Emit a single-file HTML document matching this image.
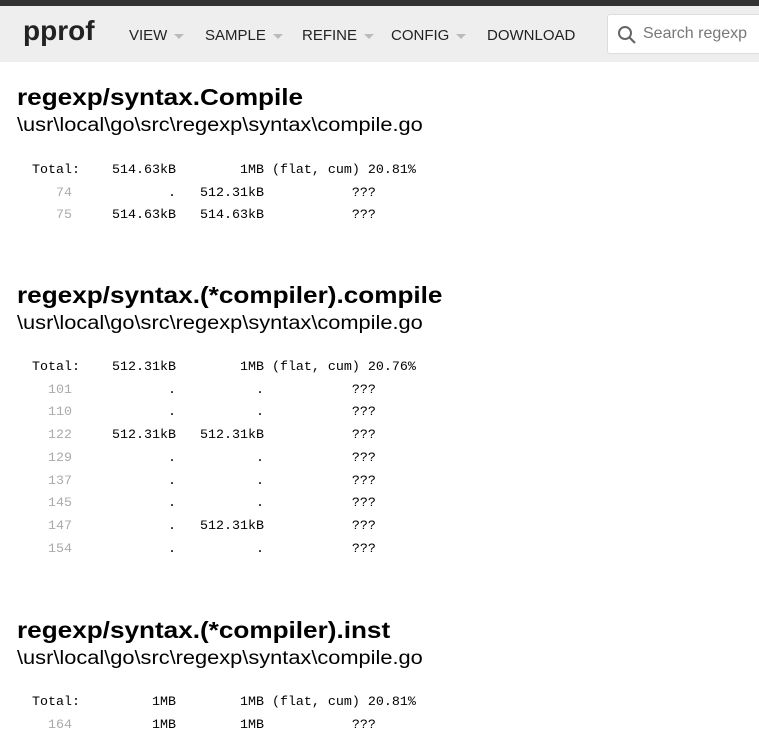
<!DOCTYPE html>
<html><head><meta charset="utf-8"><style>
body{margin:0;width:759px;height:750px;overflow:hidden;background:#fff;font-family:"Liberation Sans",sans-serif;color:#000;position:relative}
.top{position:absolute;left:0;top:0;width:759px;height:6px;background:#333}
.bar{position:absolute;left:0;top:6px;width:759px;height:56px;background:#eee}
.logo{position:absolute;left:23px;top:15px;font-size:28px;font-weight:bold;color:#222}
.m{position:absolute;top:27px;font-size:15px;color:#222}
.m i{display:inline-block;width:0;height:0;border-left:5px solid transparent;border-right:5px solid transparent;border-top:5px solid #bbb;vertical-align:middle;margin-left:7px}
.search{position:absolute;left:607px;top:14px;width:170px;height:40px;background:#fff;border:1px solid #ddd;border-radius:3px;box-sizing:border-box}
.search span{position:absolute;left:35px;top:10px;font-size:16px;color:#777}
h1{position:absolute;left:17px;margin:0;font-size:23px;font-weight:bold;transform:scaleX(1.136);transform-origin:0 0;white-space:nowrap}
.p{position:absolute;left:17px;font-size:19px;transform:scaleX(1.147);transform-origin:0 0;white-space:nowrap}
pre{position:absolute;left:16px;margin:0;font-family:"Liberation Mono",monospace;font-size:13.33px;line-height:22.7px}
pre b{font-weight:normal;color:#aaa}
</style></head><body>
<div class="top"></div><div class="bar"></div>
<div class="logo">pprof</div>
<div class="m" style="left:129px">VIEW<i></i></div>
<div class="m" style="left:205px">SAMPLE<i></i></div>
<div class="m" style="left:302px">REFINE<i></i></div>
<div class="m" style="left:391px">CONFIG<i></i></div>
<div class="m" style="left:487px">DOWNLOAD</div>
<div class="search"><svg style="position:absolute;left:9px;top:10px" width="20" height="20" viewBox="0 0 20 20"><circle cx="8" cy="8" r="6" fill="none" stroke="#666" stroke-width="2"/><line x1="12.5" y1="12.5" x2="18" y2="18" stroke="#666" stroke-width="2.2"/></svg><span>Search regexp</span></div>

<h1 style="top:84px">regexp/syntax.Compile</h1>
<div class="p" style="top:115px">\usr\local\go\src\regexp\syntax\compile.go</div>
<pre style="top:160px">  Total:    514.63kB        1MB (flat, cum) 20.81%
<b>     74</b>            .   512.31kB           ???
<b>     75</b>     514.63kB   514.63kB           ???</pre>

<h1 style="top:282px">regexp/syntax.(*compiler).compile</h1>
<div class="p" style="top:313px">\usr\local\go\src\regexp\syntax\compile.go</div>
<pre style="top:357px">  Total:    512.31kB        1MB (flat, cum) 20.76%
<b>    101</b>            .          .           ???
<b>    110</b>            .          .           ???
<b>    122</b>     512.31kB   512.31kB           ???
<b>    129</b>            .          .           ???
<b>    137</b>            .          .           ???
<b>    145</b>            .          .           ???
<b>    147</b>            .   512.31kB           ???
<b>    154</b>            .          .           ???</pre>

<h1 style="top:617px">regexp/syntax.(*compiler).inst</h1>
<div class="p" style="top:648px">\usr\local\go\src\regexp\syntax\compile.go</div>
<pre style="top:692px">  Total:         1MB        1MB (flat, cum) 20.81%
<b>    164</b>          1MB        1MB           ???</pre>
</body></html>
